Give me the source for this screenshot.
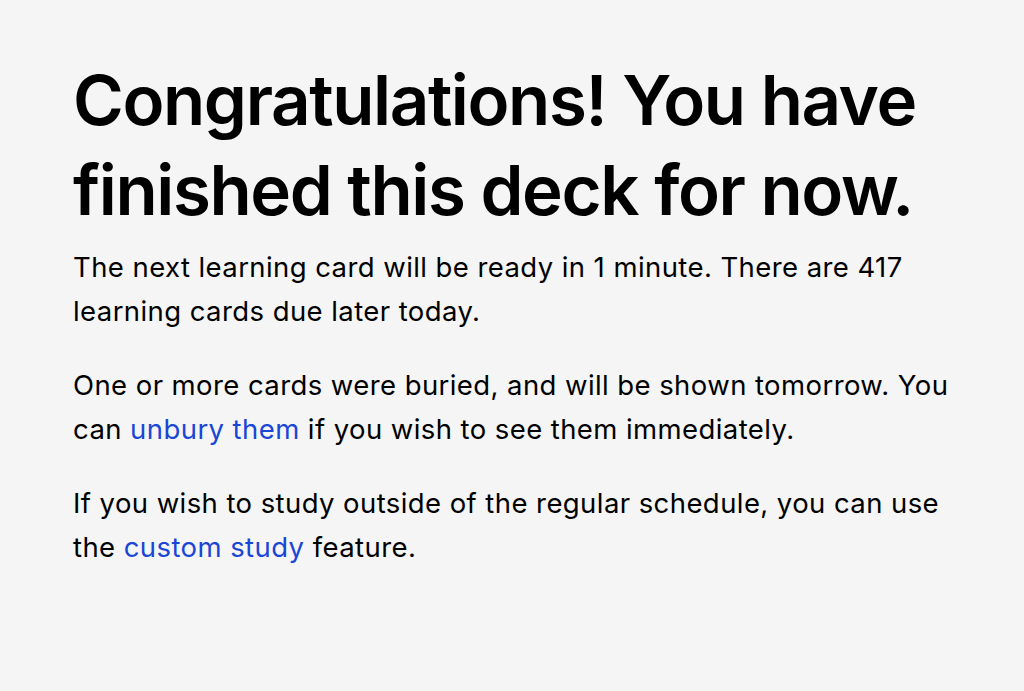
export default function App() {
  return (
    <div
      className="min-h-screen w-full bg-[#f5f5f5] text-black"
      style={{ fontFamily: 'Inter, "Noto Sans", sans-serif' }}
    >
      <div className="pl-[73px] pr-[60px] pt-[55px]">
        <h1 className="text-[69px] leading-[90px] font-semibold tracking-[-1.4px]">
          Congratulations! You have finished this deck for now.
        </h1>
        <div className="mt-[10px] text-[27.5px] leading-[44px] tracking-[0.42px] space-y-[30px]">
          <p>
            The next learning card will be ready in 1 minute. There are 417 learning cards due later today.
          </p>
          <p>
            One or more cards were buried, and will be shown tomorrow. You can{' '}
            <a href="#" className="text-[#1a46d6]">unbury them</a> if you wish to see them immediately.
          </p>
          <p>
            If you wish to study outside of the regular schedule, you can use the{' '}
            <a href="#" className="text-[#1a46d6]">custom study</a> feature.
          </p>
        </div>
      </div>
    </div>
  );
}
